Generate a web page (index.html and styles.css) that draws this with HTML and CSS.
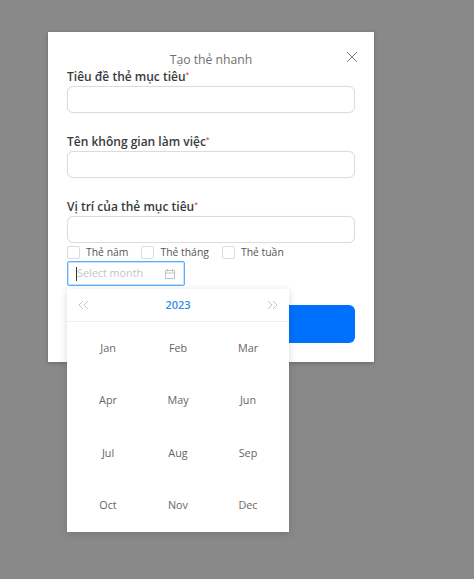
FILE: index.html
```html
<!DOCTYPE html>
<html lang="vi">
<head>
<meta charset="UTF-8" />
<title>Tạo thẻ nhanh</title>
<link rel="stylesheet" href="styles.css">
</head>
<body>
<div class="modal">
    <div class="modal-head">
        <span class="modal-title">Tạo thẻ nhanh</span>
        <svg class="modal-close" width="12" height="12" viewBox="0 0 12 12"><path d="M1 1l10 10M11 1L1 11" /></svg>
    </div>
    <div class="field">
        <label class="field-label">Tiêu đề thẻ mục tiêu<sup class="req">*</sup></label>
        <div class="text-input"></div>
    </div>
    <div class="field">
        <label class="field-label">Tên không gian làm việc<sup class="req">*</sup></label>
        <div class="text-input"></div>
    </div>
    <div class="field field-last">
        <label class="field-label">Vị trí của thẻ mục tiêu<sup class="req">*</sup></label>
        <div class="text-input"></div>
    </div>
    <div class="checks">
        <span class="check"><i class="box"></i>Thẻ năm</span>
        <span class="check"><i class="box"></i>Thẻ tháng</span>
        <span class="check"><i class="box"></i>Thẻ tuần</span>
    </div>
    <div class="month-input">
        <i class="caret"></i>
        <span class="placeholder">Select month</span>
        <svg class="cal-icon" width="12" height="12" viewBox="0 0 12 12"><path d="M1.5 2.5h9v8h-9zM1.5 5h9M3.5 1v2.5M8.5 1v2.5" /></svg>
    </div>
    <button class="submit" type="button"></button>
    <div class="picker">
        <div class="picker-head">
            <svg class="arrows" width="11" height="10" viewBox="0 0 11 10"><path d="M5 1L1 5l4 4M10 1L6 5l4 4" /></svg>
            <span class="picker-year">2023</span>
            <svg class="arrows" width="11" height="10" viewBox="0 0 11 10"><path d="M1 1l4 4-4 4M6 1l4 4-4 4" /></svg>
        </div>
        <div class="months">
            <span>Jan</span><span>Feb</span><span>Mar</span>
            <span>Apr</span><span>May</span><span>Jun</span>
            <span>Jul</span><span>Aug</span><span>Sep</span>
            <span>Oct</span><span>Nov</span><span>Dec</span>
        </div>
    </div>
</div>
</body>
</html>
```

FILE: styles.css
```css
*{margin:0;padding:0;box-sizing:border-box;}
html,body{height:100%;}
body{background:#898989;font:400 12px/1.5 "Open Sans","Noto Sans",sans-serif;color:#333;overflow:hidden;padding:32px 0 0 48px;}

.modal{position:relative;width:326px;height:330px;background:#fff;padding:19px 19px 0;box-shadow:0 1px 4px rgba(0,0,0,.25);}
.modal-head{position:relative;height:18px;text-align:center;}
.modal-title{font-size:12.2px;line-height:18px;color:#707070;}
.modal-close{position:absolute;top:0;right:-3px;}
.modal-close path{fill:none;stroke:#808080;stroke-width:1;}

.field{margin-bottom:21px;}
.field-last{margin-bottom:1px;}
.field-label{display:block;height:17px;font-size:12px;line-height:16px;font-weight:600;color:#3a3a3a;}
.req{color:#f5533d;font-size:7px;line-height:0;vertical-align:4px;}
.text-input{height:27px;border:1px solid #dcdcdc;border-radius:6px;background:#fff;box-shadow:0 0 1px rgba(0,0,0,.08);}

.checks{display:flex;gap:13px;height:17px;align-items:center;}
.check{display:flex;align-items:center;gap:6px;font-size:10.4px;color:#555;}
.box{width:13px;height:13px;border:1px solid #dcdcdc;border-radius:2px;}

.month-input{display:flex;align-items:center;width:118px;height:25px;padding:0 8px 0 8px;border:1px solid #5aaeff;border-radius:2px;box-shadow:inset 0 0 0 1px rgba(90,174,255,.35);}
.caret{width:1px;height:14px;background:#333;}
.placeholder{flex:1;font-size:10.8px;color:#c4c4c4;}
.cal-icon path{fill:none;stroke:#c0c0c0;stroke-width:1;}

.submit{display:block;width:288px;height:38px;margin-top:19px;border:0;border-radius:6px;background:#0070ff;}

.picker{position:absolute;left:19px;top:257px;width:222px;height:243px;background:#fff;box-shadow:0 2px 8px rgba(0,0,0,.15);}
.picker-head{display:flex;align-items:center;justify-content:space-between;height:33px;padding:0 11px;border-bottom:1px solid #f0f0f0;}
.picker-year{font-size:11px;font-weight:600;color:#2f8fe8;}
.arrows path{fill:none;stroke:#c4c4c4;stroke-width:1;}
.months{display:grid;grid-template-columns:repeat(3,70px);grid-auto-rows:52.4px;justify-content:center;}
.months span{display:flex;align-items:center;justify-content:center;font-size:10.8px;color:#666;}
```
